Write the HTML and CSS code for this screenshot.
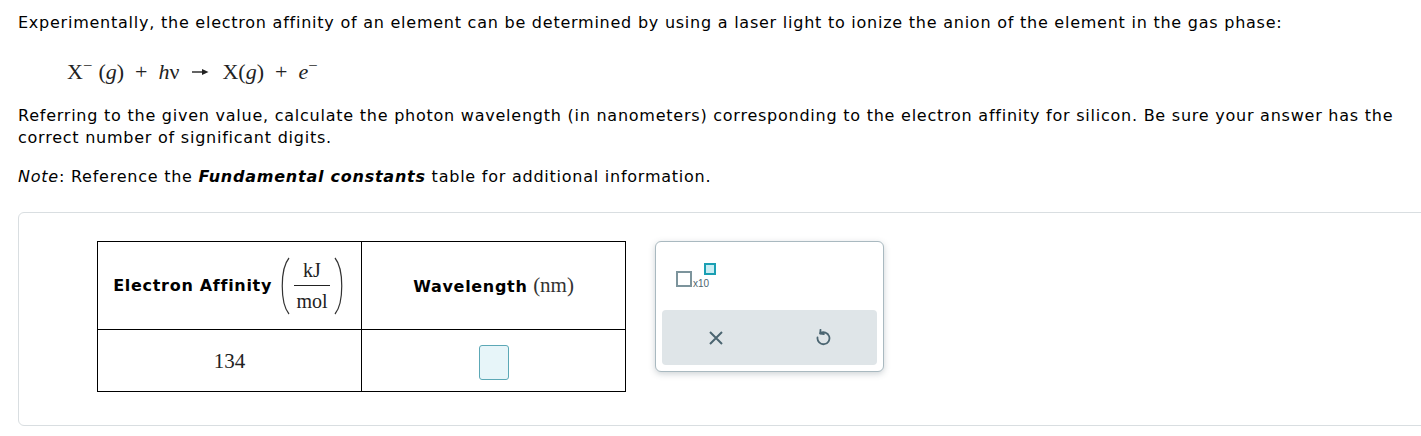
FILE: index.html
```html
<!DOCTYPE html>
<html>
<head>
<meta charset="utf-8">
<link rel="stylesheet" href="styles.css">
</head>
<body>
<div class="page">
  <p class="intro">Experimentally, the electron affinity of an element can be determined by using a laser light to ionize the anion of the element in the gas phase:</p>
  <div class="equation">
    <span class="m">X<sup class="minus">&#8211;</sup><span class="gap"></span>(<i>g</i>)</span>
    <span class="op">+</span>
    <span class="m"><i>h</i>ν</span>
    <span class="arrow"><svg width="17" height="8" viewBox="0 0 17 8"><path d="M0 4H12" stroke="#222" stroke-width="1.4"/><path d="M10 1L16.5 4L10 7Z" fill="#222"/></svg></span>
    <span class="m">X(<i>g</i>)</span>
    <span class="op">+</span>
    <span class="m"><i>e</i><sup class="minus">&#8211;</sup></span>
  </div>
  <p class="para">Referring to the given value, calculate the photon wavelength (in nanometers) corresponding to the electron affinity for silicon. Be sure your answer has the correct number of significant digits.</p>
  <p class="note"><i>Note</i>: Reference the <b><i>Fundamental constants</i></b> table for additional information.</p>

  <div class="answer-box">
    <table class="data">
      <tr class="head">
        <th>
          <span class="th-inner">
            <span class="label">Electron Affinity</span>
            <span class="unit">
              <svg class="paren" width="12" height="58" viewBox="0 0 12 58"><path d="M11 1C2 12 2 46 11 57" fill="none" stroke="#333" stroke-width="1.2"/></svg>
              <span class="frac"><span class="num">kJ</span><span class="den">mol</span></span>
              <svg class="paren" width="12" height="58" viewBox="0 0 12 58"><path d="M1 1C10 12 10 46 1 57" fill="none" stroke="#333" stroke-width="1.2"/></svg>
            </span>
          </span>
        </th>
        <th><span class="label">Wavelength</span> <span class="serif-unit">(nm)</span></th>
      </tr>
      <tr class="body">
        <td class="value">134</td>
        <td><span class="input"></span></td>
      </tr>
    </table>

    <div class="panel">
      <div class="sci">
        <span class="box-small"></span><span class="x10">x10</span><span class="box-sup"></span>
      </div>
      <div class="actions">
        <svg class="icon" width="16" height="16" viewBox="0 0 16 16"><path d="M2 2L14 14M14 2L2 14" stroke="#4b6571" stroke-width="2" fill="none"/></svg>
        <svg class="icon" width="16" height="18" viewBox="0 0 16 18"><path d="M5.2 4.2A6 6 0 1 1 2.5 8.5" stroke="#4b6571" stroke-width="1.8" fill="none" stroke-linecap="round"/><path d="M5.5 0.8L5.2 4.6L9 5" stroke="#4b6571" stroke-width="1.8" fill="none" stroke-linecap="round" stroke-linejoin="round"/></svg>
      </div>
    </div>
  </div>
</div>
</body>
</html>
```

FILE: styles.css
```css
html, body {
  margin: 0;
  padding: 0;
  background: #fff;
  overflow: hidden;
}
body {
  width: 1421px;
  height: 436px;
}
.page {
  padding: 12px 0 0 18px;
  font-family: "DejaVu Sans", Verdana, sans-serif;
  font-size: 16px;
  letter-spacing: 0.76px;
  line-height: 22px;
  color: #000;
}
p {
  margin: 0;
}
.intro {
  white-space: nowrap;
}
.equation {
  margin: 27px 0 0 49px;
  height: 22px;
  display: flex;
  align-items: center;
  gap: 8px;
  font-family: "Liberation Serif", "Times New Roman", serif;
  font-size: 22px;
  letter-spacing: 0;
  color: #222;
}
.equation .m {
  white-space: nowrap;
}
.gap {
  display: inline-block;
  width: 6px;
}
.equation .op {
  margin: 0 3px;
}
.minus {
  font-size: 15px;
  vertical-align: 10px;
  line-height: 0;
  margin: 0 1px;
}
.arrow {
  display: inline-flex;
  align-items: center;
  margin: 0 5px;
}
.para {
  margin-top: 22px;
  width: 1390px;
}
.note {
  margin-top: 17px;
}
.answer-box {
  margin-top: 24px;
  width: 1420px;
  height: 214px;
  box-sizing: border-box;
  border: 1px solid #d9dee1;
  border-radius: 6px;
  padding: 28px 0 0 78px;
  display: flex;
  align-items: flex-start;
  gap: 29px;
  letter-spacing: 0;
}
.data {
  border-collapse: collapse;
  width: 529px;
}
.data th, .data td {
  border: 1px solid #000;
  width: 264px;
  padding: 0;
  text-align: center;
  vertical-align: middle;
}
.data tr.head {
  height: 88px;
}
.data tr.body {
  height: 62px;
}
.label {
  font-weight: bold;
  font-size: 16px;
  letter-spacing: 0.7px;
  color: #000;
}
.th-inner {
  display: inline-flex;
  align-items: center;
  gap: 6px;
}
.unit {
  display: inline-flex;
  align-items: center;
  gap: 1px;
  font-family: "Liberation Serif", "Times New Roman", serif;
  font-weight: normal;
  font-size: 20px;
  color: #222;
}
.frac {
  display: inline-flex;
  flex-direction: column;
  align-items: center;
  line-height: 26px;
  padding: 0 3px;
}
.frac .num {
  border-bottom: 1px solid #222;
  padding: 0 9px 2px;
  width: 100%;
  box-sizing: border-box;
  text-align: center;
}
.frac .den {
  padding-top: 2px;
}
.serif-unit {
  font-family: "Liberation Serif", "Times New Roman", serif;
  font-weight: normal;
  font-size: 21px;
  color: #333;
}
.value {
  font-family: "Liberation Serif", "Times New Roman", serif;
  font-size: 21px;
  color: #222;
}
.input {
  display: inline-block;
  width: 30px;
  height: 35px;
  box-sizing: border-box;
  border: 1.5px solid #5ca8b6;
  border-radius: 3px;
  background: #e7f5f9;
  vertical-align: middle;
  margin-top: 3px;
}
.panel {
  width: 229px;
  height: 131px;
  box-sizing: border-box;
  border: 1px solid #a9b9c0;
  border-radius: 6px;
  box-shadow: 0 2px 6px rgba(60, 80, 90, 0.25);
  padding: 0 6px 6px;
  display: flex;
  flex-direction: column;
  background: #fff;
}
.sci {
  height: 68px;
  display: flex;
  align-items: flex-start;
  padding: 21px 0 0 14px;
  box-sizing: border-box;
}
.box-small {
  display: inline-block;
  width: 16px;
  height: 16px;
  box-sizing: border-box;
  border: 2px solid #7c949c;
  margin-top: 8px;
}
.x10 {
  font-family: "Liberation Sans", Arial, sans-serif;
  font-size: 10px;
  line-height: 10px;
  color: #4d6670;
  margin-top: 16px;
  margin-left: 1px;
}
.box-sup {
  display: inline-block;
  width: 12px;
  height: 12px;
  box-sizing: border-box;
  border: 2px solid #1a9fb3;
  background: #c9edf3;
  margin-left: -5px;
  margin-top: 0;
}
.actions {
  flex: 1;
  background: #dfe5e8;
  border-radius: 4px;
  display: flex;
  align-items: center;
  justify-content: space-around;
}
.icon {
  display: block;
}
```
